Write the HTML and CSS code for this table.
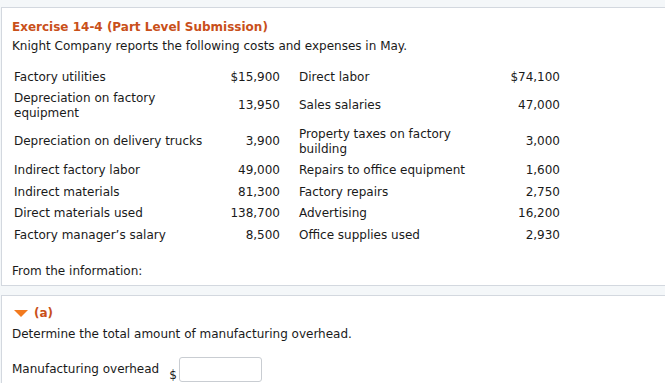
FILE: index.html
```html
<!DOCTYPE html>
<html>
<head>
<meta charset="utf-8">
<link rel="stylesheet" href="styles.css">
</head>
<body>
<div class="page">
  <section class="panel intro">
    <h1 class="title">Exercise 14-4 (Part Level Submission)</h1>
    <p class="lead">Knight Company reports the following costs and expenses in May.</p>
    <div class="costs">
      <div class="row">
        <span class="label">Factory utilities</span><span class="amt">$15,900</span>
        <span class="label">Direct labor</span><span class="amt">$74,100</span>
      </div>
      <div class="row">
        <span class="label">Depreciation on factory equipment</span><span class="amt">13,950</span>
        <span class="label">Sales salaries</span><span class="amt">47,000</span>
      </div>
      <div class="row">
        <span class="label">Depreciation on delivery trucks</span><span class="amt">3,900</span>
        <span class="label">Property taxes on factory building</span><span class="amt">3,000</span>
      </div>
      <div class="row">
        <span class="label">Indirect factory labor</span><span class="amt">49,000</span>
        <span class="label">Repairs to office equipment</span><span class="amt">1,600</span>
      </div>
      <div class="row">
        <span class="label">Indirect materials</span><span class="amt">81,300</span>
        <span class="label">Factory repairs</span><span class="amt">2,750</span>
      </div>
      <div class="row">
        <span class="label">Direct materials used</span><span class="amt">138,700</span>
        <span class="label">Advertising</span><span class="amt">16,200</span>
      </div>
      <div class="row">
        <span class="label">Factory manager’s salary</span><span class="amt">8,500</span>
        <span class="label">Office supplies used</span><span class="amt">2,930</span>
      </div>
    </div>
    <p class="from">From the information:</p>
  </section>

  <section class="panel part">
    <h2 class="part-head">
      <svg class="caret" width="14" height="7" viewBox="0 0 14 7"><path d="M0 0H14L7 7Z" fill="#f27a1f"/></svg>
      <span>(a)</span>
    </h2>
    <p class="question">Determine the total amount of manufacturing overhead.</p>
    <div class="answer">
      <span class="answer-label">Manufacturing overhead</span>
      <span class="currency">$</span>
      <input class="field" type="text">
    </div>
  </section>
</div>
</body>
</html>
```
FILE: styles.css
```css
html, body {
  margin: 0;
  padding: 0;
  background: #f4f7f9;
}

body {
  font-family: Verdana, "DejaVu Sans", sans-serif;
  font-size: 12px;
  line-height: 14.5px;
  color: #1a1a1a;
}

.page {
  padding-top: 7px;
}

.panel {
  background: #fff;
  border: 1px solid #d3d8df;
  border-right: none;
  margin-left: 1px;
}

.intro {
  padding: 12px 0 7px 10px;
}

.title {
  margin: 0;
  font-size: 12px;
  font-weight: bold;
  color: #c9501a;
  line-height: 14.5px;
}

.lead {
  margin: 4px 0 0;
}

.costs {
  margin-top: 13px;
  margin-left: 2px;
}

/* two label/amount pairs per line */
.row {
  display: grid;
  grid-template-columns: 196px 70px 189px 91px;
  align-items: center;
  padding: 3.5px 0;
}

.row .amt {
  text-align: right;
}

.row .label:nth-child(3) {
  padding-left: 19px;
}

.from {
  margin: 18px 0 0;
}

.part {
  margin-top: 9px;
  padding: 10px 0 0 10px;
  height: 90px;
}

.part-head {
  margin: 0;
  font-size: 12px;
  font-weight: bold;
  color: #c9501a;
  display: flex;
  align-items: center;
  gap: 6px;
  line-height: 14.5px;
}

.caret {
  margin-left: 2px;
  margin-top: 1px;
}

.question {
  margin: 6px 0 0;
}

.answer {
  margin-top: 16px;
  display: flex;
  align-items: flex-start;
}

.answer-label {
  margin-top: 5px;
}

.currency {
  margin-left: 10px;
  margin-top: 11px;
}

.field {
  margin: 0 0 0 2px;
  width: 83px;
  height: 25px;
  box-sizing: border-box;
  border: 1px solid #c9cdd2;
  border-radius: 3px;
  padding: 0;
  background: #fff;
}
```
